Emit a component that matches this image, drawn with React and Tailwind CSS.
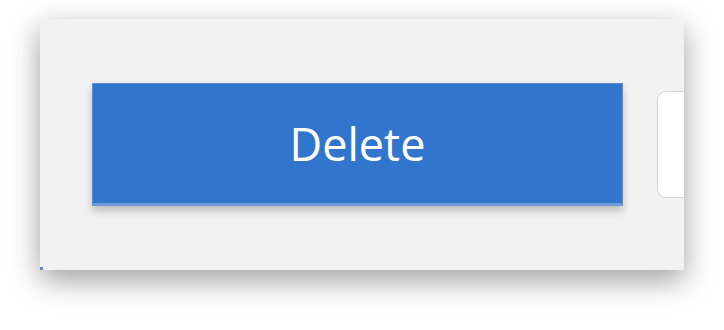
export default function App() {
  return (
    <div className="w-[724px] h-[330px] bg-white pl-[40px] pt-[19px] overflow-hidden">
      <div className="relative w-[644px] h-[251px] bg-[#f2f2f2] shadow-[0_10px_28px_rgba(0,0,0,0.38)] overflow-hidden">
        <div className="flex items-center gap-[34px] pl-[52px] pt-[64px]">
          <div
            className="shrink-0 w-[531px] h-[123px] bg-[#3275cc] border border-[#5a8ed3] border-b-[3px] border-b-[#6c9bd8] shadow-[0_5px_8px_rgba(0,0,0,0.22)] flex items-center justify-center text-white text-[45px] leading-none"
            style={{ fontFamily: '"Open Sans", "Noto Sans", sans-serif' }}
          >
            <span className="-mt-[1px]">Delete</span>
          </div>
          <div className="shrink-0 w-[80px] h-[107px] bg-white border border-[#d4d4d4] rounded-[9px]" />
        </div>
        <div className="absolute left-0 bottom-0 w-[3px] h-[3px] bg-[#5b8ed3]" />
      </div>
    </div>
  );
}
